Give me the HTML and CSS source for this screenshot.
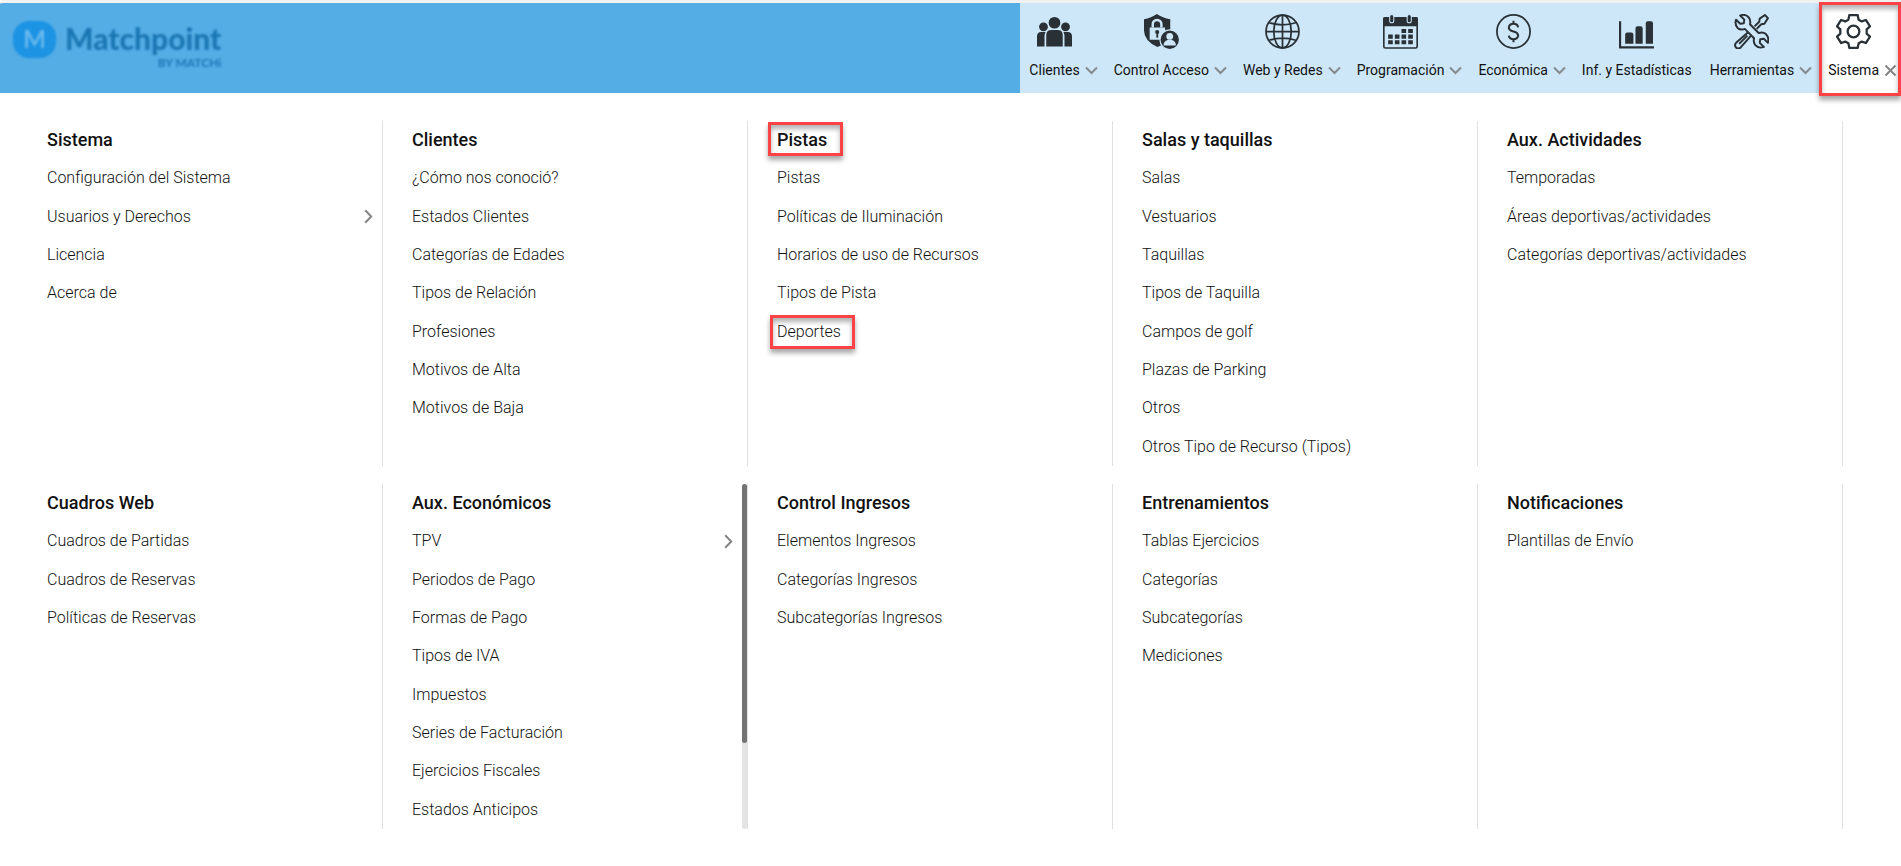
FILE: index.html
```html
<!DOCTYPE html>
<html lang="es">

<head>
  <meta charset="UTF-8" />
  <meta name="viewport" content="width=device-width, initial-scale=1.0" />
  <title>Matchpoint - Sistema</title>
  <link rel="stylesheet" href="styles.css">
</head>

<body>
  <svg class="defs" width="0" height="0" aria-hidden="true">
    <symbol id="down" viewBox="0 0 13 9">
      <path d="M1 1.500l5.500 5.500L12 1.500" fill="none" stroke="#858a8e" stroke-width="2" />
    </symbol>
    <symbol id="right" viewBox="0 0 9 15">
      <path d="M1.200 1.200l6 6.300-6 6.300" fill="none" stroke="#858585" stroke-width="2" />
    </symbol>
  </svg>

  <header class="topbar">
    <a class="logo" href="#">
      <span class="logo-mark">M</span>
      <span class="logo-text">
        <span class="logo-name">Matchpoint</span>
        <span class="logo-by">BY MATCHi</span>
      </span>
    </a>

    <nav class="menu">
      <button class="menu-item" type="button">
        <svg class="icon" viewBox="0 0 34 34">
          <g fill="#293036">
            <circle cx="17" cy="8.500" r="5.700" />
            <circle cx="6.300" cy="12.500" r="4.300" />
            <circle cx="27.700" cy="12.500" r="4.300" />
            <path d="M9 31.500V20.500q0-5 5-5h6q5 0 5 5v11zM0 31.500V22q0-4.500 4-4.500h4.300q-1 2-1 4v10zM34 31.500V22q0-4.500-4-4.500h-4.300q1 2 1 4v10z" />
          </g>
        </svg>
        <span class="label">Clientes</span>
        <svg class="chevron"><use href="#down" /></svg>
      </button>
      <button class="menu-item" type="button">
        <svg class="icon" viewBox="0 0 34 34">
          <path d="M12.500 0Q18 4 25.500 5v11q-8 2-9 9 0 3 1 5l-4.500 2Q0 26 0 16V5q7-1 12.500-5z" fill="#293036" />
          <path d="M8.500 13v-3a4.200 4.200 0 0 1 8.400 0v3" fill="none" stroke="#cde7f8" stroke-width="2.400" />
          <path d="M5.500 13h15v4.500q-4 2.500-4.500 7.500H5.500z" fill="#cde7f8" />
          <circle cx="12.800" cy="17.500" r="2" fill="#293036" />
          <path d="M12 18h1.800v5H12z" fill="#293036" />
          <circle cx="25" cy="25" r="9.500" fill="#293036" stroke="#cde7f8" stroke-width="1.200" />
          <circle cx="25" cy="21.800" r="3.300" fill="#cde7f8" />
          <path d="M19 30.500q0-4 4-5.200h4q4 1.200 4 5.200z" fill="#cde7f8" />
        </svg>
        <span class="label">Control Acceso</span>
        <svg class="chevron"><use href="#down" /></svg>
      </button>
      <button class="menu-item" type="button">
        <svg class="icon" viewBox="0 0 34 34">
          <g fill="none" stroke="#293036" stroke-width="1.700">
            <circle cx="17" cy="17" r="16" />
            <ellipse cx="17" cy="17" rx="8.500" ry="16" />
            <path d="M17 1v32M1 17h32M4 8.500q13 4 26 0M4 25.500q13-4 26 0" />
          </g>
        </svg>
        <span class="label">Web y Redes</span>
        <svg class="chevron"><use href="#down" /></svg>
      </button>
      <button class="menu-item" type="button">
        <svg class="icon" viewBox="0 0 34 34">
          <rect x="0.800" y="4" width="32.400" height="29" rx="1.500" fill="none" stroke="#293036" stroke-width="1.600" />
          <path d="M0 12V4.500Q0 3 1.500 3h31Q34 3 34 4.500V12z" fill="#293036" />
          <rect x="6.500" y="0.500" width="4" height="8" rx="2" fill="#293036" stroke="#cde7f8" />
          <rect x="23.500" y="0.500" width="4" height="8" rx="2" fill="#293036" stroke="#cde7f8" />
          <path d="M18 14.500h4.500v4H18zM24.500 14.500H29v4h-4.500zM5 20h4.500v4H5zM11.500 20H16v4h-4.500zM18 20h4.500v4H18zM24.500 20H29v4h-4.500zM5 25.500h4.500v4H5zM11.500 25.500H16v4h-4.500zM18 25.500h4.500v4H18zM24.500 25.500H29v4h-4.500z" fill="#293036" />
        </svg>
        <span class="label">Programación</span>
        <svg class="chevron"><use href="#down" /></svg>
      </button>
      <button class="menu-item" type="button">
        <svg class="icon" viewBox="0 0 34 34">
          <g fill="none" stroke="#293036">
            <circle cx="17" cy="17" r="16.100" stroke-width="1.700" />
            <path d="M21.500 13q-.5-3.500-4.500-3.500t-4.500 3.500q0 2.800 4.500 4t4.500 4q-.5 3.500-4.500 3.500T12.500 21M17 6.500v3M17 24.500v3" stroke-width="2" />
          </g>
        </svg>
        <span class="label">Económica</span>
        <svg class="chevron"><use href="#down" /></svg>
      </button>
      <button class="menu-item no-sub" type="button">
        <svg class="icon" viewBox="0 0 34 34">
          <path d="M1 7v25.500h33" fill="none" stroke="#293036" stroke-width="2.200" />
          <path d="M6 20q0-2 2-2h4q2 0 2 2v9H6zM16 14q0-2 2-2h3q2 0 2 2v15h-7zM26 9q0-2 2-2h3q2 0 2 2v20h-7z" fill="#293036" />
        </svg>
        <span class="label">Inf. y Estadísticas</span>
      </button>
      <button class="menu-item" type="button">
        <svg class="icon" viewBox="0 0 34 34">
          <g fill="none" stroke="#293036" stroke-width="1.900" stroke-linejoin="round">
            <path d="M20 12l4.500-4.500.5-3L30 1l3 3-3.500 5.500-3 .5L22 14.500M14 17.500L2 28q-2 2.500 0 4.500t4.500 0L17 20.500M13 21l-8 8" />
            <path d="M2 5.500L6 9.500l3.500-.5.500-3.500L6 1.500q5-2 8.500 2 2 3 1 6.500L24 18.500q4-1.500 7 1 3.500 3.500 2 8.500l-4-4-3.500.5-.5 3.500 4 4q-5 2-8.500-2-2-3-1-6.500L10.500 14.500q-4 1.500-7-1Q.500 10 2 5.500z" fill="#cde7f8" />
          </g>
        </svg>
        <span class="label">Herramientas</span>
        <svg class="chevron"><use href="#down" /></svg>
      </button>
      <button class="menu-item active marked" type="button">
        <svg class="icon" viewBox="0 0 34 34">
          <g fill="none" stroke="#293036" stroke-width="2.200" stroke-linejoin="round">
            <path d="M13 1h8l1 4.500 3 1.700 4-1.400 4 6.200-3.200 3v4l3.200 3-4 6.200-4-1.400-3 1.700-1 4.500h-8l-1-4.500-3-1.700-4 1.400L1 22l3.200-3v-4L1 12l4-6.200 4 1.400 3-1.700z" />
            <circle cx="17" cy="17" r="5.700" />
          </g>
        </svg>
        <span class="label">Sistema</span>
        <svg class="close" viewBox="0 0 13 13">
          <path d="M1.500 1.500l10 10M11.500 1.500l-10 10" fill="none" stroke="#858585" stroke-width="2" />
        </svg>
      </button>
    </nav>
  </header>

  <main class="panel">
    <section class="column">
      <h2>Sistema</h2>
      <a href="#">Configuración del Sistema</a>
      <a href="#">Usuarios y Derechos <svg class="arrow"><use href="#right" /></svg></a>
      <a href="#">Licencia</a>
      <a href="#">Acerca de</a>
    </section>
    <section class="column">
      <h2>Clientes</h2>
      <a href="#">¿Cómo nos conoció?</a>
      <a href="#">Estados Clientes</a>
      <a href="#">Categorías de Edades</a>
      <a href="#">Tipos de Relación</a>
      <a href="#">Profesiones</a>
      <a href="#">Motivos de Alta</a>
      <a href="#">Motivos de Baja</a>
    </section>
    <section class="column">
      <h2><span class="marked mark-title">Pistas</span></h2>
      <a href="#">Pistas</a>
      <a href="#">Políticas de Iluminación</a>
      <a href="#">Horarios de uso de Recursos</a>
      <a href="#">Tipos de Pista</a>
      <a href="#"><span class="marked mark-link">Deportes</span></a>
    </section>
    <section class="column">
      <h2>Salas y taquillas</h2>
      <a href="#">Salas</a>
      <a href="#">Vestuarios</a>
      <a href="#">Taquillas</a>
      <a href="#">Tipos de Taquilla</a>
      <a href="#">Campos de golf</a>
      <a href="#">Plazas de Parking</a>
      <a href="#">Otros</a>
      <a href="#">Otros Tipo de Recurso (Tipos)</a>
    </section>
    <section class="column">
      <h2>Aux. Actividades</h2>
      <a href="#">Temporadas</a>
      <a href="#">Áreas deportivas/actividades</a>
      <a href="#">Categorías deportivas/actividades</a>
    </section>

    <section class="column">
      <h2>Cuadros Web</h2>
      <a href="#">Cuadros de Partidas</a>
      <a href="#">Cuadros de Reservas</a>
      <a href="#">Políticas de Reservas</a>
    </section>
    <section class="column scrollable">
      <h2>Aux. Económicos</h2>
      <a href="#">TPV <svg class="arrow"><use href="#right" /></svg></a>
      <a href="#">Periodos de Pago</a>
      <a href="#">Formas de Pago</a>
      <a href="#">Tipos de IVA</a>
      <a href="#">Impuestos</a>
      <a href="#">Series de Facturación</a>
      <a href="#">Ejercicios Fiscales</a>
      <a href="#">Estados Anticipos</a>
      <div class="track"><div class="thumb"></div></div>
    </section>
    <section class="column">
      <h2>Control Ingresos</h2>
      <a href="#">Elementos Ingresos</a>
      <a href="#">Categorías Ingresos</a>
      <a href="#">Subcategorías Ingresos</a>
    </section>
    <section class="column">
      <h2>Entrenamientos</h2>
      <a href="#">Tablas Ejercicios</a>
      <a href="#">Categorías</a>
      <a href="#">Subcategorías</a>
      <a href="#">Mediciones</a>
    </section>
    <section class="column">
      <h2>Notificaciones</h2>
      <a href="#">Plantillas de Envío</a>
    </section>
  </main>
</body>

</html>
```
FILE: styles.css
```css
* {
  box-sizing: border-box;
}

body {
  margin: 0;
  font-family: Roboto, "Liberation Sans", sans-serif;
  background-color: #fff;
  color: #1c1c1c;
}

.defs {
  position: absolute;
}

/* top bar */
.topbar {
  display: flex;
  justify-content: space-between;
  border-top: 3px solid #f1f1f1;
  background-color: #55ade6;
  border-top-left-radius: 4px;
}

.logo {
  display: flex;
  align-items: flex-start;
  gap: 9px;
  padding: 18px 13px;
  font-family: Lato, sans-serif;
  color: #1b76b2;
  text-decoration: none;
  filter: blur(1px);
}

.logo-mark {
  width: 43px;
  height: 37px;
  border-radius: 16px;
  background-color: #1c93e3;
  color: #69b9ee;
  font-size: 24px;
  font-weight: bold;
  line-height: 36px;
  text-align: center;
}

.logo-text {
  display: flex;
  flex-direction: column;
  align-items: flex-end;
}

.logo-name {
  font-size: 30px;
  font-weight: 900;
  line-height: 34px;
}

.logo-by {
  font-size: 12px;
  font-weight: bold;
  line-height: 16px;
}

.menu {
  display: flex;
  background-color: #cde7f8;
}

.menu-item {
  display: grid;
  grid-template-columns: auto 13px;
  grid-template-rows: 35px 20px;
  column-gap: 5px;
  row-gap: 11px;
  align-content: start;
  align-items: center;
  justify-items: center;
  height: 90px;
  padding: 11px 7px 0 9px;
  border: 0;
  background: none;
  color: #111;
  font-family: inherit;
  font-size: 14px;
  white-space: nowrap;
  cursor: pointer;
}

.icon {
  width: 35px;
  height: 35px;
}

.label {
  grid-row: 2;
}

.no-sub {
  grid-template-columns: auto;
  padding-right: 9px;
}

.chevron {
  grid-area: 2 / 2;
  width: 13px;
  height: 9px;
}

.close {
  grid-area: 2 / 2;
  width: 13px;
  height: 13px;
}

.active {
  background-color: #fff;
  padding-right: 4px;
}

/* red frames */
.marked {
  position: relative;
}

.marked::after {
  content: "";
  position: absolute;
  inset: -1px 0 -3px 0;
  border: 3px solid #fb4245;
  box-shadow: 0 4px 5px rgba(0, 0, 0, 0.35), inset 0 4px 5px rgba(0, 0, 0, 0.3);
  pointer-events: none;
}

.mark-title::after {
  inset: -7px -16px -6px -9px;
}

.mark-link::after {
  inset: -7px -14px -7px -7px;
}

/* submenu */
.panel {
  display: grid;
  grid-template-columns: repeat(5, 1fr);
  row-gap: 18px;
  padding: 28px 58px 37px 18px;
}

.column {
  position: relative;
  display: grid;
  grid-template-rows: repeat(9, 1fr);
  align-items: center;
  min-height: 345px;
  padding: 0 9px 0 29px;
  border-right: 1px solid #e0e0e0;
}

.column h2 {
  margin: 0;
  font-size: 18px;
  font-weight: 500;
  line-height: 22px;
  color: #111;
}

.column a {
  display: flex;
  align-items: center;
  justify-content: space-between;
  font-size: 16px;
  font-weight: 300;
  line-height: 20px;
  color: #111;
  text-decoration: none;
}

.arrow {
  width: 9px;
  height: 15px;
}

.scrollable {
  padding-right: 14px;
}

.track {
  position: absolute;
  top: 0;
  right: 0;
  bottom: 0;
  width: 5px;
  border-radius: 3px;
  background-color: #e4e4e4;
}

.thumb {
  height: 75%;
  border-radius: 3px;
  background-color: #737373;
}
```
